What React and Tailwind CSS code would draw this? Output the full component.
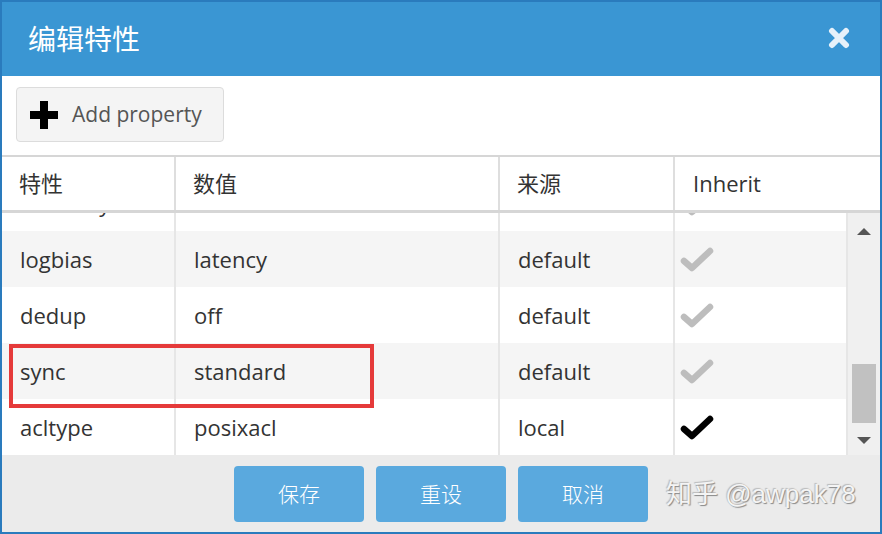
import React from "react";

const rows = [
    { name: "readonly", value: "off", source: "default", inherit: true },
    { name: "logbias", value: "latency", source: "default", inherit: true },
    { name: "dedup", value: "off", source: "default", inherit: true },
    { name: "sync", value: "standard", source: "default", inherit: true },
    { name: "acltype", value: "posixacl", source: "local", inherit: false },
];

const Check = ({ dark }) => (
    <svg width="36" height="32" viewBox="0 0 36 32">
        <path
            d="M5 18 L13 25 L31 8"
            fill="none"
            stroke={dark ? "#000" : "#bdbdbd"}
            strokeWidth="6.5"
            strokeLinecap="round"
            strokeLinejoin="round"
        />
    </svg>
);

const App = () => {
    const font = { fontFamily: '"Open Sans", "Noto Sans CJK SC", sans-serif' };
    return (
        <div className="w-[882px] h-[534px] relative flex flex-col border-2 border-[#2a7bbd] bg-white text-[#333]" style={font}>
            {/* title bar */}
            <div className="h-[74px] shrink-0 bg-[#3a96d3] flex items-center justify-between pl-[26px] pr-[30px]">
                <span className="text-white text-[28px] font-['Noto_Sans_CJK_SC',sans-serif] -mt-[2px]">编辑特性</span>
                <svg width="22" height="22" viewBox="0 0 22 22" className="-mt-[2px]">
                    <path d="M4 4 L18 18 M18 4 L4 18" stroke="#e6f1fa" strokeWidth="6" strokeLinecap="round" />
                </svg>
            </div>

            {/* toolbar */}
            <div className="h-[79px] shrink-0 pl-[14px] pt-[11px]">
                <button className="h-[55px] w-[208px] flex items-center gap-[13px] pl-[12px] bg-[#f4f4f4] border border-[#dcdcdc] rounded-[4px]">
                    <svg width="30" height="30" viewBox="0 0 30 30">
                        <rect x="11" y="1" width="8" height="28" fill="#000" />
                        <rect x="1" y="11" width="28" height="8" fill="#000" />
                    </svg>
                    <span className="text-[21px] text-[#555]">Add property</span>
                </button>
            </div>

            {/* table header */}
            <div className="h-[58px] shrink-0 flex border-t-2 border-b-[3px] border-[#d6d6d6] text-[22px]">
                <div className="w-[174px] border-r-2 border-[#dedede] flex items-center pl-[17px]">特性</div>
                <div className="w-[324px] border-r-2 border-[#dedede] flex items-center pl-[17px]">数值</div>
                <div className="w-[175px] border-r-2 border-[#dedede] flex items-center pl-[17px]">来源</div>
                <div className="flex-1 flex items-center pl-[18px]">Inherit</div>
            </div>

            {/* body */}
            <div className="h-[242px] shrink-0 flex overflow-hidden">
                <div className="w-[846px] overflow-hidden">
                    <div className="-mt-[38px]">
                        {rows.map((r, i) => (
                            <div key={r.name} className={`h-[56px] flex text-[22px] ${i % 2 === 1 ? "bg-[#f5f5f5]" : "bg-white"}`}>
                                <div className="w-[174px] border-r-2 border-[#e6e6e6] flex items-center pl-[18px]">{r.name}</div>
                                <div className="w-[324px] border-r-2 border-[#e6e6e6] flex items-center pl-[18px]">{r.value}</div>
                                <div className="w-[175px] border-r-2 border-[#e6e6e6] flex items-center pl-[18px]">{r.source}</div>
                                <div className="flex-1 border-r-2 border-[#e6e6e6] flex items-center pl-[4px]">
                                    <Check dark={!r.inherit} />
                                </div>
                            </div>
                        ))}
                    </div>
                </div>
                <div className="w-[32px] bg-[#f0f0f0] flex flex-col items-center">
                    <div className="h-[36px] flex items-center">
                        <div className="w-0 h-0 border-l-[7px] border-r-[7px] border-b-[7px] border-l-transparent border-r-transparent border-b-[#555]" />
                    </div>
                    <div className="flex-1 w-[24px] flex flex-col justify-end pb-[2px]">
                        <div className="h-[59px] bg-[#c1c1c1]" />
                    </div>
                    <div className="h-[30px] flex items-center">
                        <div className="w-0 h-0 border-l-[7px] border-r-[7px] border-t-[7px] border-l-transparent border-r-transparent border-t-[#555]" />
                    </div>
                </div>
            </div>

            {/* footer */}
            <div className="flex-1 bg-[#ebebeb] flex items-center pl-[232px] pt-[1px] gap-[12px]">
                {["保存", "重设", "取消"].map((t) => (
                    <button key={t} className="w-[130px] h-[56px] bg-[#5aa9de] rounded-[4px] text-white text-[21px] font-['Noto_Sans_CJK_SC',sans-serif] font-light">
                        {t}
                    </button>
                ))}
                <span className="ml-[6px] text-[26px] text-[#f4f4f4] font-['Liberation_Sans','Noto_Sans_CJK_SC',sans-serif] [text-shadow:1px_1px_1px_#888,-1px_-1px_1px_#bbb]">
                    知乎 @awpak78
                </span>
            </div>

            {/* highlight box */}
            <div className="absolute left-[7px] top-[342px] w-[365px] h-[64px] border-4 border-[#e53a3a]" />
        </div>
    );
};

export default App;
